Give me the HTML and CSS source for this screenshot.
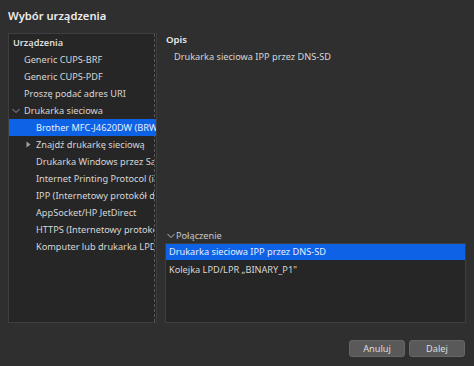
FILE: index.html
```html
<!DOCTYPE html>
<html lang="pl">
<head>
<meta charset="utf-8">
<link rel="stylesheet" href="styles.css">
</head>
<body>
<div class="dialog">
  <div class="title">Wybór urządzenia</div>
  <div class="main">
    <div class="tree">
      <div class="tree-inner">
        <div class="tree-head">Urządzenia</div>
        <div class="row l1">Generic CUPS-BRF</div>
        <div class="row l1">Generic CUPS-PDF</div>
        <div class="row l1">Proszę podać adres URI</div>
        <div class="row l1 exp"><svg class="chev" width="8" height="6" viewBox="0 0 8 6"><path d="M0.5 1 L4 4.5 L7.5 1" fill="none" stroke="#9a9a9a" stroke-width="1"/></svg>Drukarka sieciowa</div>
        <div class="row l2 sel">Brother MFC-J4620DW (BRW</div>
        <div class="row l2 exp"><svg class="tri" width="5" height="7" viewBox="0 0 5 7"><path d="M0.5 0.5 L4.5 3.5 L0.5 6.5 Z" fill="#a0a0a0"/></svg>Znajdź drukarkę sieciową</div>
        <div class="row l2">Drukarka Windows przez Samba</div>
        <div class="row l2">Internet Printing Protocol (ipp)</div>
        <div class="row l2">IPP (Internetowy protokół drukowania)</div>
        <div class="row l2">AppSocket/HP JetDirect</div>
        <div class="row l2">HTTPS (Internetowy protokół drukowania)</div>
        <div class="row l2">Komputer lub drukarka LPD/LPR</div>
      </div>
    </div>
    <div class="right">
      <div class="sec-head">Opis</div>
      <div class="desc">Drukarka sieciowa IPP przez DNS-SD</div>
      <div class="spacer"></div>
      <div class="conn-head"><svg class="chev2" width="8" height="6" viewBox="0 0 8 6"><path d="M0.5 1 L4 4.5 L7.5 1" fill="none" stroke="#bdbdbd" stroke-width="1"/></svg><span>Połączenie</span></div>
      <div class="conn-list">
        <div class="crow sel">Drukarka sieciowa IPP przez DNS-SD</div>
        <div class="crow">Kolejka LPD/LPR „BINARY_P1"</div>
      </div>
    </div>
  </div>
  <div class="footer">
    <button class="btn">Anuluj</button>
    <button class="btn">Dalej</button>
  </div>
</div>
</body>
</html>
```
FILE: styles.css
```css
html, body {
  margin: 0;
  padding: 0;
  background: #2f2f2f;
}
body {
  font-family: "Noto Sans", "Open Sans", sans-serif;
  font-size: 9.2px;
  color: #d6d6d6;
}
.dialog {
  width: 474px;
  height: 366px;
  box-sizing: border-box;
  padding: 0 8px;
  display: flex;
  flex-direction: column;
}
.title {
  height: 33px;
  line-height: 32px;
  font-size: 11.2px;
  font-weight: 600;
  color: #ececec;
}
.main {
  display: flex;
  gap: 8px;
  height: 290px;
}
.tree {
  width: 149px;
  flex: none;
  box-sizing: border-box;
  border: 1px solid #3e3e3e;
  background: #262626;
  overflow: hidden;
}
.tree-inner {
  height: 100%;
  box-sizing: border-box;
  border-right: 1px dashed #5a5a5a;
  margin-right: 1px;
}
.tree-head {
  height: 17px;
  line-height: 17px;
  padding-left: 4px;
  font-weight: 600;
  color: #dedede;
}
.row {
  height: 17px;
  line-height: 17px;
  white-space: nowrap;
  overflow: hidden;
  position: relative;
}
.l1 { padding-left: 15px; }
.l2 { padding-left: 27px; }
.row.sel {
  background: #0d62e6;
  color: #e8eefc;
  margin-right: -2px;
}
.chev {
  position: absolute;
  left: 3px;
  top: 6px;
}
.tri {
  position: absolute;
  left: 17px;
  top: 5px;
}
.right {
  flex: 1;
  display: flex;
  flex-direction: column;
}
.sec-head {
  font-weight: 600;
  font-size: 9.6px;
  color: #e6e6e6;
  line-height: 13px;
  padding-left: 1px;
}
.desc {
  padding-left: 9px;
  line-height: 18px;
  margin-top: 2px;
}
.spacer { flex: 1; }
.conn-head {
  display: flex;
  align-items: center;
  gap: 1px;
  height: 15px;
  line-height: 15px;
  padding-left: 2px;
  color: #c8c8c8;
}
.conn-list {
  height: 80px;
  box-sizing: border-box;
  border: 1px solid #3e3e3e;
  background: #262626;
}
.crow {
  height: 16px;
  line-height: 16px;
  padding-left: 3px;
  margin-bottom: 2px;
  white-space: nowrap;
}
.crow.sel {
  background: #0d62e6;
  color: #e8eefc;
}
.footer {
  display: flex;
  justify-content: flex-end;
  gap: 4px;
  margin-top: 17px;
  padding-right: 1px;
}
.btn {
  width: 56px;
  height: 17px;
  padding: 0;
  border: 1px solid #666;
  border-radius: 3px;
  background: #595959;
  color: #dcdcdc;
  font-family: "Noto Sans", "Open Sans", sans-serif;
  font-size: 9.2px;
  line-height: 15px;
}
```
